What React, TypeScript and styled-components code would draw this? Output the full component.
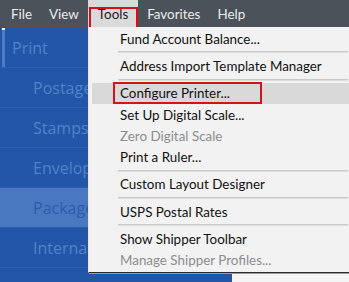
import styled, { createGlobalStyle } from 'styled-components';

const Global = createGlobalStyle`
    html, body {
        margin: 0;
        padding: 0;
        width: 349px;
        height: 282px;
        overflow: hidden;
        font-family: Lato, "Noto Sans", sans-serif;
    }
`;

const Screen = styled.div`
    position: relative;
    width: 349px;
    height: 282px;
    display: flex;
    flex-direction: column;
    background: #f3f3f3;
    overflow: hidden;
`;

const MenuBar = styled.div`
    height: 27px;
    flex: none;
    display: flex;
    align-items: stretch;
    gap: 1px;
    background: #4b525a;
    padding-left: 3px;
`;

const MenuBarItem = styled.div<{ $open?: boolean }>`
    position: relative;
    display: flex;
    align-items: center;
    padding: 0 ${p => (p.$open ? '10px' : '8px')};
    font-size: 13.4px;
    color: ${p => (p.$open ? '#1a1a1a' : '#ececec')};
    background: ${p => (p.$open ? '#dadada' : 'transparent')};
`;

const Callout = styled.div`
    position: absolute;
    border: 2px solid #d4121e;
    pointer-events: none;
`;

const Body = styled.div`
    flex: 1;
    display: flex;
`;

const Sidebar = styled.div`
    width: 232px;
    flex: none;
    background: #2256a8;
    display: flex;
    flex-direction: column;
    overflow: hidden;
    padding-top: 1px;
`;

const NavRow = styled.div<{ $active?: boolean; $indent?: boolean; $current?: boolean }>`
    position: relative;
    height: 39px;
    flex: none;
    display: flex;
    align-items: center;
    padding-left: ${p => (p.$indent ? '33px' : '12px')};
    font-family: "Open Sans", sans-serif;
    font-size: 16px;
    white-space: nowrap;
    color: ${p => (p.$active ? '#2a5cab' : '#5282c8')};
    background: ${p => (p.$active ? '#4a78c0' : 'transparent')};
    border-bottom: 1px solid #2d5fae;

    ${p =>
        p.$current &&
        `
        &::before {
            content: '';
            position: absolute;
            left: 2px;
            top: 0;
            width: 3px;
            height: 37px;
            background: #4f7bc5;
            border-top: 2px solid #f0f4fb;
        }
    `}
`;

const Main = styled.div`
    flex: 1;
    background: #f4f4f4;
`;

const Dropdown = styled.div`
    position: absolute;
    left: 88px;
    top: 27px;
    width: 258px;
    height: 244px;
    background: #f2f2f2;
    border-left: 1px solid #e8e8e8;
    border-right: 1px solid #3a3a3a;
    border-bottom: 1px solid #2a2a2a;
    box-shadow: 1px 1px 0 #9a9a9a;
    padding: 1px 3px 0 3px;
    display: flex;
    flex-direction: column;
`;

const Item = styled.div<{ $disabled?: boolean; $hover?: boolean }>`
    position: relative;
    height: 21.3px;
    flex: none;
    display: flex;
    align-items: center;
    padding-left: 28px;
    font-size: 13.4px;
    white-space: nowrap;
    color: ${p => (p.$disabled ? '#8d8d8d' : '#111111')};
    background: ${p => (p.$hover ? '#d9d9d9' : 'transparent')};
`;

const Separator = styled.div`
    height: 6px;
    flex: none;
    margin-left: 26px;
    margin-right: 2px;
    display: flex;
    align-items: center;

    &::after {
        content: '';
        flex: 1;
        height: 1px;
        background: #c9c9c9;
        border-bottom: 1px solid #dedede;
    }
`;

export default function App() {
    return (
        <Screen>
            <Global />
            <MenuBar>
                <MenuBarItem>File</MenuBarItem>
                <MenuBarItem>View</MenuBarItem>
                <MenuBarItem $open>
                    Tools
                    <Callout style={{ left: 1, top: 7, right: 0, bottom: -2 }} />
                </MenuBarItem>
                <MenuBarItem>Favorites</MenuBarItem>
                <MenuBarItem>Help</MenuBarItem>
            </MenuBar>
            <Body>
                <Sidebar>
                    <NavRow $current>Print</NavRow>
                    <NavRow $indent>Postage</NavRow>
                    <NavRow $indent>Stamps</NavRow>
                    <NavRow $indent>Envelopes</NavRow>
                    <NavRow $indent $active>Packages</NavRow>
                    <NavRow $indent>International</NavRow>
                    <NavRow $indent>Labels</NavRow>
                </Sidebar>
                <Main />
            </Body>
            <Dropdown>
                <Item>Fund Account Balance...</Item>
                <Separator />
                <Item>Address Import Template Manager</Item>
                <Separator />
                <Item $hover>
                    Configure Printer...
                    <Callout style={{ left: 21, top: -1, width: 145, height: 18 }} />
                </Item>
                <Item>Set Up Digital Scale...</Item>
                <Item $disabled>Zero Digital Scale</Item>
                <Item>Print a Ruler...</Item>
                <Separator />
                <Item>Custom Layout Designer</Item>
                <Separator />
                <Item>USPS Postal Rates</Item>
                <Separator />
                <Item>Show Shipper Toolbar</Item>
                <Item $disabled>Manage Shipper Profiles...</Item>
            </Dropdown>
        </Screen>
    );
}
